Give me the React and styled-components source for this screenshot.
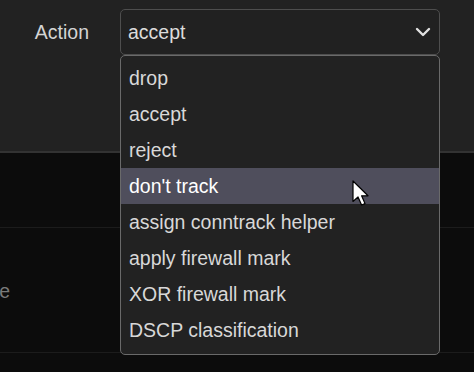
import React from 'react';
import styled, { createGlobalStyle } from 'styled-components';

const Global = createGlobalStyle`
  html, body {
    margin: 0;
    padding: 0;
    background: #0c0c0c;
    font-family: "Liberation Sans", Arial, sans-serif;
    overflow: hidden;
  }
`

const Page = styled.div`
  width: 474px;
  height: 372px;
  display: flex;
  flex-direction: column;
  background: #0c0c0c;
`

const Panel = styled.div`
  background: #222222;
  height: 153px;
  border-bottom: 2px solid #333333;
  padding-top: 9px;
  box-sizing: border-box;
`

const FormRow = styled.div`
  display: flex;
  align-items: flex-start;
  gap: 31px;
`

const Label = styled.div`
  width: 89px;
  height: 46px;
  display: flex;
  align-items: center;
  justify-content: flex-end;
  white-space: nowrap;
  font-size: 19.5px;
  color: #d4d4d4;
`

const SelectWrap = styled.div`
  position: relative;
  width: 320px;
`

const SelectBox = styled.div`
  height: 46px;
  box-sizing: border-box;
  border: 1px solid #4e4e4e;
  border-radius: 5px;
  background: #212121;
  display: flex;
  align-items: center;
  justify-content: space-between;
  padding: 0 8px 0 7px;
  font-size: 19.5px;
  color: #dcdcdc;
`

const Menu = styled.div`
  position: absolute;
  top: 46px;
  left: 0;
  width: 320px;
  height: 300px;
  box-sizing: border-box;
  border: 1px solid #6a6a6a;
  border-radius: 5px;
  background: #222222;
  padding-top: 4px;
  z-index: 10;
`

const Option = styled.div`
  height: 36px;
  display: flex;
  align-items: center;
  padding-left: 8px;
  font-size: 19.5px;
  color: ${p => p.active ? '#ffffff' : '#d8d8d8'};
  background: ${p => p.active ? '#4f4e5c' : 'transparent'};
`

const Band = styled.div`
  height: ${p => p.h}px;
  border-bottom: 1px solid #1c1c1c;
  display: flex;
  align-items: center;
  box-sizing: border-box;
`

const CutLabel = styled.div`
  width: 10px;
  display: flex;
  justify-content: flex-end;
  white-space: nowrap;
  font-size: 19.5px;
  color: #7a7a7a;
  margin-top: 2px;
`

const Cursor = styled.svg`
  position: absolute;
  left: 232px;
  top: 171px;
  z-index: 20;
`

const options = [
  'drop',
  'accept',
  'reject',
  "don't track",
  'assign conntrack helper',
  'apply firewall mark',
  'XOR firewall mark',
  'DSCP classification',
]

const App = () => {
  return (
    <Page>
      <Global />
      <Panel>
        <FormRow>
          <Label>Action</Label>
          <SelectWrap>
            <SelectBox>
              <span>accept</span>
              <svg width="16" height="10" viewBox="0 0 16 10">
                <polyline points="2,2 8,8 14,2" fill="none" stroke="#e0e0e0" strokeWidth="2.4" strokeLinecap="round" strokeLinejoin="round" />
              </svg>
            </SelectBox>
            <Menu>
              {options.map(o => (
                <Option key={o} active={o === "don't track"}>{o}</Option>
              ))}
            </Menu>
            <Cursor width="20" height="28" viewBox="0 0 20 28">
              <path d="M1 1 L1 21.5 L6 17 L9.6 25 L13 23.6 L9.6 15.8 L16 15.8 Z" fill="#ffffff" stroke="#000000" strokeWidth="1.2" strokeLinejoin="round" />
            </Cursor>
          </SelectWrap>
        </FormRow>
      </Panel>
      <Band h={75} />
      <Band h={125}>
        <CutLabel>Name</CutLabel>
      </Band>
    </Page>
  );
};

export default App;
